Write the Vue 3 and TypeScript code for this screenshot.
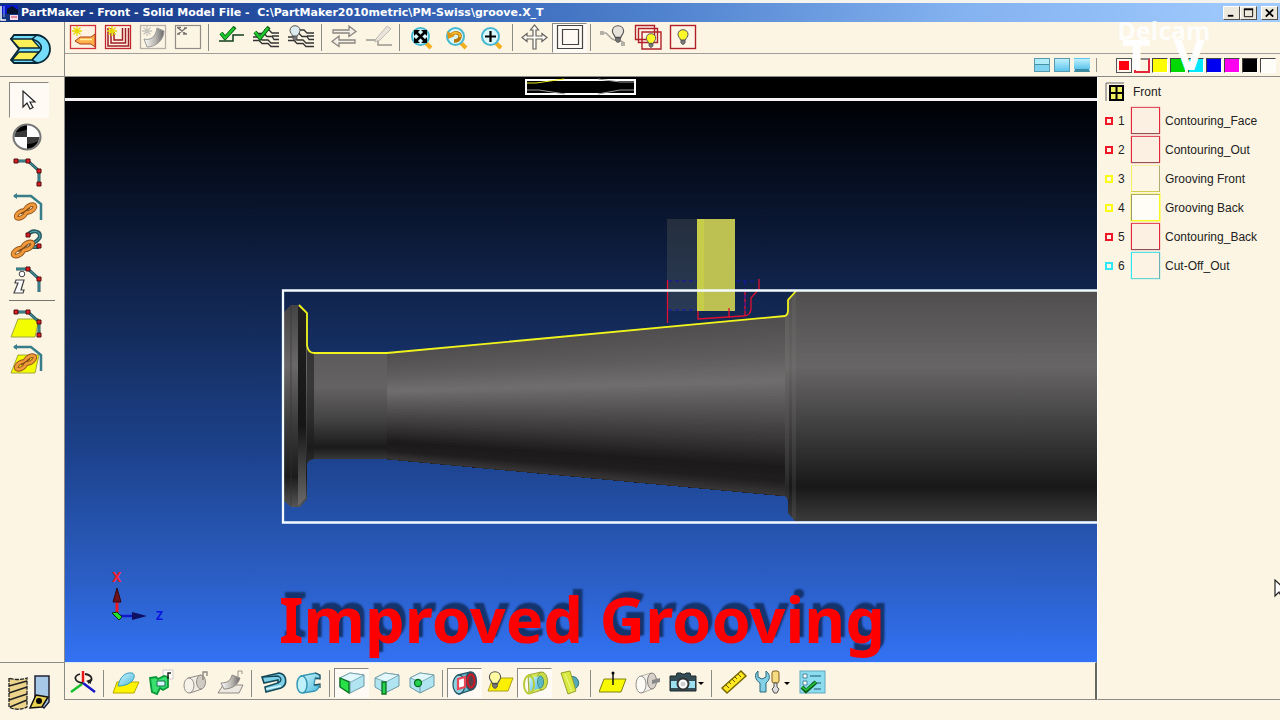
<script setup lang="ts">
import { ref } from 'vue'

interface Tool { id: string; label: string; wide?: boolean; pressed?: boolean; sep?: boolean }

const topTools: Tool[] = [
  { id: 'newgroup', label: 'New tool group' },
  { id: 'pocket', label: 'New pocket group' },
  { id: 'surface', label: 'New surface group' },
  { id: 'delete', label: 'Delete group' },
  { id: 's1', label: '', sep: true },
  { id: 'check', label: 'Verify path' },
  { id: 'checkall', label: 'Verify all paths' },
  { id: 'bulblines', label: 'Show paths' },
  { id: 's2', label: '', sep: true },
  { id: 'swap', label: 'Swap direction' },
  { id: 'pen', label: 'Edit line' },
  { id: 's3', label: '', sep: true },
  { id: 'zoomfit', label: 'Zoom to fit' },
  { id: 'zoomprev', label: 'Zoom previous' },
  { id: 'zoomin', label: 'Zoom in' },
  { id: 's4', label: '', sep: true },
  { id: 'pan', label: 'Pan' },
  { id: 'frame', label: 'Frame', pressed: true },
  { id: 's5', label: '', sep: true },
  { id: 'bulbpath', label: 'Highlight path' },
  { id: 'bulbstack', label: 'Show all groups' },
  { id: 'bulbbox', label: 'Show group' },
]

const leftTools: Tool[] = [
  { id: 'arrow', label: 'Select', pressed: true },
  { id: 'origin', label: 'Origin' },
  { id: 'poly', label: 'Profile' },
  { id: 'chain', label: 'Chain' },
  { id: 'chaincurve', label: 'Chain curve' },
  { id: 'info', label: 'Profile info' },
  { id: 's1', label: '', sep: true },
  { id: 'polyface', label: 'Profile on face' },
  { id: 'chainface', label: 'Chain on face' },
]

const bottomTools: Tool[] = [
  { id: 'axes', label: 'Rotate axes' },
  { id: 's1', label: '', sep: true },
  { id: 'dome', label: 'Surface on plane' },
  { id: 'greenpart', label: 'Align part' },
  { id: 'graycyl', label: 'Align cylinder' },
  { id: 'graysurf', label: 'Align surface' },
  { id: 's2', label: '', sep: true },
  { id: 'slot', label: 'Open solid' },
  { id: 'halfcyl', label: 'Half cylinder' },
  { id: 's3', label: '', sep: true },
  { id: 'boxface', label: 'Pick face', pressed: true },
  { id: 'boxedge', label: 'Pick edge' },
  { id: 'boxpoint', label: 'Pick point' },
  { id: 's4', label: '', sep: true },
  { id: 'redcyl', label: 'Shaded part', pressed: true },
  { id: 'bulbplane', label: 'Show plane' },
  { id: 'stock', label: 'Show stock', pressed: true },
  { id: 'clamp', label: 'Show clamp' },
  { id: 's5', label: '', sep: true },
  { id: 'planepin', label: 'Work plane' },
  { id: 'rotcyl', label: 'Rotate part' },
  { id: 'camera', label: 'Snapshot', wide: true },
  { id: 's6', label: '', sep: true },
  { id: 'ruler', label: 'Measure' },
  { id: 'wrench', label: 'Tools', wide: true },
  { id: 'checklist', label: 'Options' },
]

const groups = [
  { name: 'Contouring_Face', color: '#f01828', inner: '#fcf0e2', tone: 'red' },
  { name: 'Contouring_Out', color: '#f01828', inner: '#fcf0e2', tone: 'red' },
  { name: 'Grooving Front', color: '#fbfb18', inner: '#fdf6e4', tone: 'open' },
  { name: 'Grooving Back', color: '#fbfb18', inner: '#fffdf6', tone: 'yellow' },
  { name: 'Contouring_Back', color: '#f01828', inner: '#fcf0e2', tone: 'red' },
  { name: 'Cut-Off_Out', color: '#30e8f4', inner: '#fcf3e4', tone: 'cyan' },
]
const selected = ref('Grooving Back')

const swatches = ['#ff0010', '#fdf5e4', '#ffff00', '#00d800', '#00e8ff', '#0000f0', '#ff00f0', '#000000', '#fffdf8']

// Shading along the cone: grey level at fractions of its height
const stops: [number, number][] = [[0, 78], [0.2, 92], [0.36, 110], [0.5, 86], [0.68, 56], [0.84, 26], [0.92, 30], [1, 54]]
function level(f: number): number {
  for (let i = 1; i < stops.length; i++) {
    const [a, va] = stops[i - 1]
    const [b, vb] = stops[i]
    if (f <= b) return Math.round(va + ((vb - va) * (f - a)) / (b - a))
  }
  return 54
}
// Each band reaches down to the lower edge, and the next one is painted over it
const count = 72
const bands = Array.from({ length: count }, (_, i) => {
  const a = i / count
  const v = level((i + 0.5) / count)
  return {
    points: `387,${353 + 106 * a} 786,${316 + 180 * a} 786,496 387,459`,
    fill: `rgb(${v + 2},${v},${v})`,
  }
})
</script>

<template>
  <svg class="defs" aria-hidden="true">
    <defs>
      <linearGradient id="g-metal" x1="0" y1="0" x2="0" y2="1">
        <stop offset="0" stop-color="#504e4e" /><stop offset=".33" stop-color="#676565" />
        <stop offset=".55" stop-color="#464545" /><stop offset=".85" stop-color="#181818" />
        <stop offset="1" stop-color="#3c3b3b" />
      </linearGradient>
      <linearGradient id="g-neck" x1="0" y1="0" x2="0" y2="1">
        <stop offset="0" stop-color="#5b5959" /><stop offset=".35" stop-color="#646262" />
        <stop offset=".62" stop-color="#454444" /><stop offset=".86" stop-color="#1a1a1a" />
        <stop offset="1" stop-color="#464545" />
      </linearGradient>
      <linearGradient id="g-flange" x1="0" y1="0" x2="0" y2="1">
        <stop offset="0" stop-color="#454444" /><stop offset=".3" stop-color="#6a6868" />
        <stop offset=".6" stop-color="#3a3939" /><stop offset=".85" stop-color="#1b1b1b" />
        <stop offset="1" stop-color="#555" />
      </linearGradient>
      <linearGradient id="g-rim" x1="0" y1="0" x2="0" y2="1">
        <stop offset="0" stop-color="#222" /><stop offset=".6" stop-color="#161616" />
        <stop offset=".78" stop-color="#3c3c3c" /><stop offset="1" stop-color="#6b6969" />
      </linearGradient>
      <linearGradient id="g-blue" x1="0" y1="0" x2="1" y2="1">
        <stop offset="0" stop-color="#d8f8ff" /><stop offset="1" stop-color="#46b8dc" />
      </linearGradient>
      <linearGradient id="g-grey" x1="0" y1="0" x2="1" y2="0">
        <stop offset="0" stop-color="#fff" /><stop offset=".6" stop-color="#b5b2ad" /><stop offset="1" stop-color="#666" />
      </linearGradient>

      <symbol id="i-spark" viewBox="0 0 10 10">
        <path d="M5 0v10M0 5h10M1.500 1.500l7 7M8.500 1.500l-7 7" stroke="currentColor" stroke-width="1.300" fill="none" />
      </symbol>
      <symbol id="i-bulb" viewBox="0 0 12 16">
        <path d="M6 .7c-3 0-5 2-5 4.800 0 2.300 2 3.300 2.500 5.500h5C9 8.800 11 7.800 11 5.500 11 2.700 9 .7 6 .7z" fill="currentColor" stroke="#555" />
        <path d="M3.800 11.500h4.400v2L7 15.300H5l-1.200-1.800z" fill="#777" stroke="#444" stroke-width=".6" />
      </symbol>
      <symbol id="i-chainlink" viewBox="0 0 26 20">
        <g fill="none" stroke="#94561a" stroke-width="4.600">
          <ellipse cx="8" cy="13.500" rx="5.500" ry="3" transform="rotate(-32 8 13.500)" />
          <ellipse cx="17" cy="7.500" rx="5.500" ry="3" transform="rotate(-32 17 7.500)" />
        </g>
        <g fill="none" stroke="#f0983c" stroke-width="2.800">
          <ellipse cx="8" cy="13.500" rx="5.500" ry="3" transform="rotate(-32 8 13.500)" />
          <ellipse cx="17" cy="7.500" rx="5.500" ry="3" transform="rotate(-32 17 7.500)" />
        </g>
        <path d="M8 13l9-6" stroke="#7c4814" stroke-width="1.200" />
      </symbol>

      <symbol id="i-newgroup" viewBox="0 0 28 28">
        <rect x="1.500" y="1.500" width="25" height="23" fill="#fff2e0" stroke="#d03038" stroke-width="1.300" />
        <path d="M6 17l5-4h11l4-3v13l-4-3H11z" fill="#ffb04a" stroke="#b03c18" /><path d="M11 15.500h12" stroke="#fff0a0" stroke-width="1.500" />
        <use href="#i-spark" x="3" y="2" width="10" height="10" color="#e8d800" />
      </symbol>
      <symbol id="i-pocket" viewBox="0 0 28 28">
        <rect x="1.500" y="1.500" width="25" height="23" fill="#fff2e0" stroke="#c02830" stroke-width="1.300" />
        <path d="M4 4v18h20.500V4M7 4v15h14.500V4M10 8v8h8.500V4" fill="none" stroke="#a01c24" stroke-width="1.500" />
        <use href="#i-spark" x="3" y="2" width="10" height="10" color="#e8d800" />
      </symbol>
      <symbol id="i-surface" viewBox="0 0 28 28">
        <rect x="1.500" y="1.500" width="25" height="23" fill="none" stroke="#b5afa8" stroke-width="1.300" />
        <path d="M5 15c7 2 12-3 13-11l7 3c0 9-8 16-17 16z" fill="url(#g-grey)" stroke="#999" />
        <use href="#i-spark" x="3" y="2" width="10" height="10" color="#c8c4bd" />
      </symbol>
      <symbol id="i-delete" viewBox="0 0 28 28">
        <rect x="1.500" y="1.500" width="25" height="23" fill="none" stroke="#908c88" stroke-width="1.200" />
        <path d="M4 4l8 6M12 4l-8 6M3 3.500h4M9 10h4M3 10h3M10 4h3" stroke="#77736f" stroke-width="1.500" />
      </symbol>
      <symbol id="i-check" viewBox="0 0 28 28">
        <path d="M2 17h14v-6h11" fill="none" stroke="#123c20" stroke-width="1.500" />
        <path d="M4 9l4 5L18 3" fill="none" stroke="#086010" stroke-width="4" /><path d="M4 9l4 5L17 4" fill="none" stroke="#20c830" stroke-width="2.300" />
      </symbol>
      <symbol id="i-lines" viewBox="0 0 28 28">
        <path d="M1 13h6l3 3h6l3 3h8M1 16.500h6l3 3h6l3 3h8M5 9.500h7l3 3h5l2 3h5M12 6h5l3 3h7M20 12h7" fill="none" stroke="#333" stroke-width="1.300" />
      </symbol>
      <symbol id="i-checkall" viewBox="0 0 28 28">
        <use href="#i-lines" width="28" height="28" />
        <path d="M3 8l5 6L17 3" fill="none" stroke="#086010" stroke-width="4" /><path d="M3 8l5 6L16 4" fill="none" stroke="#20c830" stroke-width="2.300" />
      </symbol>
      <symbol id="i-bulblines" viewBox="0 0 28 28">
        <use href="#i-lines" width="28" height="28" /><use href="#i-bulb" x="2" y="1" width="12" height="16" color="#dcebee" />
      </symbol>
      <symbol id="i-swap" viewBox="0 0 28 28">
        <path d="M3 6h16V2l7 5.500-7 5V9H3zM25 16H9v-4l-7 5.500 7 5V19h16z" fill="#f4efe5" stroke="#8a8680" stroke-width="1.300" />
      </symbol>
      <symbol id="i-pen" viewBox="0 0 28 28">
        <path d="M1 16h12v5h14" fill="none" stroke="#9a968f" stroke-width="1.500" /><path d="M11 15L22 2l4 3-11 11-5 2z" fill="#eae5dc" stroke="#c0bbb3" />
      </symbol>
      <symbol id="i-glass" viewBox="0 0 28 28">
        <path d="M17 18l6 6" stroke="#f5b020" stroke-width="4" /><circle cx="12.500" cy="12.500" r="8.500" fill="#d8f8fb" stroke="#48b8d0" stroke-width="2" />
      </symbol>
      <symbol id="i-zoomfit" viewBox="0 0 28 28">
        <use href="#i-glass" width="28" height="28" /><path d="M8 8l9 9M17 8l-9 9" stroke="#000" stroke-width="2.500" /><path d="M6 6h6l-6 6zM19 6v6l-6-6zM6 19v-6l6 6zM19 19h-6l6-6z" />
      </symbol>
      <symbol id="i-zoomprev" viewBox="0 0 28 28">
        <use href="#i-glass" width="28" height="28" /><path d="M8 11c4-4 10-2 9 2s-4 4-6 4" fill="none" stroke="#b87808" stroke-width="3.400" /><path d="M8 11c4-4 10-2 9 2" fill="none" stroke="#f8b830" stroke-width="1.800" /><path d="M4 7l1 8 7-3z" fill="#e09814" />
      </symbol>
      <symbol id="i-zoomin" viewBox="0 0 28 28">
        <use href="#i-glass" width="28" height="28" /><path d="M12.500 7v11M7 12.500h11" stroke="#000" stroke-width="2.200" />
      </symbol>
      <symbol id="i-pan" viewBox="0 0 28 28">
        <path d="M12 25V15H6v2.500L1 13.500l5-4V12h6V6H9.500L13.500 1l4 5H15v6h6V9.500l5 4-5 4V15h-6v10z" fill="#fffdf8" stroke="#66625e" stroke-width="1.200" />
      </symbol>
      <symbol id="i-frame" viewBox="0 0 28 28">
        <path d="M1.500 1.500h25v23h-25zM6.500 5.500h16v15h-16z" fill="#fffaf4" stroke="#444" stroke-width="1.200" />
      </symbol>
      <symbol id="i-bulbpath" viewBox="0 0 28 28">
        <path d="M3 9h4l5 5c4 4 9 2 12 4v4" fill="none" stroke="#aaa59e" stroke-width="1.500" /><path d="M1 7h4v4H1zM22 18h4v4h-4z" fill="#b5b0a8" /><use href="#i-bulb" x="12" y="1" width="14" height="18" color="#e8e3da" />
      </symbol>
      <symbol id="i-bulbstack" viewBox="0 0 28 28">
        <path d="M1.500 1.500h19v14h-19zM4.500 4.500h19v14h-19zM8 8h19v17H8z" fill="#fff5e6" stroke="#b02028" stroke-width="1.400" /><use href="#i-bulb" x="11" y="9" width="12" height="15" color="#fdf828" />
      </symbol>
      <symbol id="i-bulbbox" viewBox="0 0 28 28">
        <rect x="1.500" y="1.500" width="25" height="23" fill="#fff5e6" stroke="#b02028" stroke-width="1.400" /><use href="#i-bulb" x="8" y="5" width="12" height="16" color="#fdf828" />
      </symbol>

      <symbol id="i-pointer" viewBox="0 0 14 20">
        <path d="M1 1v16l4-4 3 6 3-1.500-3-5.500h5z" fill="#fff" stroke="#222" stroke-width="1.200" />
      </symbol>
      <symbol id="i-arrow" viewBox="0 0 36 34"><use href="#i-pointer" x="12" y="6" width="14" height="22" /></symbol>
      <symbol id="i-origin" viewBox="0 0 36 34">
        <ellipse cx="17" cy="18" rx="13.500" ry="12.500" fill="#fff" stroke="#777" stroke-width="2" />
        <path d="M17 18V6.500C10 6.500 5 11 4.500 18zM17 18h12.500c-.5 7-6 11.500-12.500 11.500z" fill="#3a3a3a" />
        <path d="M6 13c3-5 8-7 11-6.500v4C13 12 9 13 6 13zM17 25c4 0 8-1 11-3-2 5-7 7.500-11 7.500z" fill="#000" />
      </symbol>
      <symbol id="i-line" viewBox="0 0 36 34">
        <path d="M6 6h12l11 10v13" fill="none" stroke="#275c66" stroke-width="3" /><path d="M6 6h12l11 10v13" fill="none" stroke="#4aa0aa" stroke-width="1" />
      </symbol>
      <symbol id="i-poly" viewBox="0 0 36 34">
        <use href="#i-line" width="36" height="34" /><path d="M4 4h4v4H4zM16 4h4v4h-4zM27 14h4v4h-4zM27 27h4v4h-4z" fill="#e01820" stroke="#501010" />
      </symbol>
      <symbol id="i-chain" viewBox="0 0 36 34">
        <path d="M4 5h17l10 8v16" fill="none" stroke="#387e8a" stroke-width="2.500" /><path d="M3 5l4-3v6z" fill="#387e8a" /><use href="#i-chainlink" x="3" y="10" width="26" height="20" />
      </symbol>
      <symbol id="i-chaincurve" viewBox="0 0 36 34">
        <path d="M18 8c4-6 12-4 12 1s-8 6-10 11h9" fill="none" stroke="#285c65" stroke-width="4" /><path d="M18 8c4-6 12-4 12 1s-8 6-10 11h9" fill="none" stroke="#5ab0b8" stroke-width="1" />
        <use href="#i-chainlink" x="0" y="11" width="27" height="21" /><path d="M16 6h4v4h-4zM27 17h4v4h-4z" fill="#e01820" stroke="#501010" />
      </symbol>
      <symbol id="i-info" viewBox="0 0 36 34">
        <use href="#i-line" width="36" height="34" /><path d="M16 4h4v4h-4zM27 14h4v4h-4z" fill="#e01820" stroke="#501010" />
        <circle cx="12" cy="11" r="2.800" fill="#fff" stroke="#444" /><path d="M6 17h8l-3 10h3l-1 3H4l4-10H5z" fill="#fff" stroke="#444" stroke-width="1.200" />
      </symbol>
      <symbol id="i-polyface" viewBox="0 0 36 34">
        <path d="M8 13h21l-4 18H1z" fill="#f4fc00" stroke="#a0a840" /><use href="#i-poly" width="36" height="34" />
      </symbol>
      <symbol id="i-chainface" viewBox="0 0 36 34">
        <path d="M8 13h21l-4 18H1z" fill="#f4fc00" stroke="#a0a840" /><use href="#i-chain" width="36" height="34" />
      </symbol>

      <symbol id="i-axes" viewBox="0 0 28 28">
        <path d="M14 2v11" stroke="#e81818" stroke-width="2.500" /><path d="M13 15L2 23" stroke="#18c030" stroke-width="2.500" /><path d="M14 14l12 9" stroke="#1818c8" stroke-width="2.500" />
        <path d="M14 14c-9-1-10-7-3-9M16 5c7 1 9 6 3 9" fill="none" stroke="#222" stroke-width="1.800" /><path d="M17 12l5-2 0 5z" fill="#222" />
      </symbol>
      <symbol id="i-dome" viewBox="0 0 28 28"><path d="M5 13h22l-5 11H1z" fill="#fff400" stroke="#b8a800" /><path d="M6 17C8 8 13 3 20 4c4 1 2 7-1 9-4 3-8 4-13 4z" fill="url(#g-blue)" stroke="#3a9cb8" /></symbol>
      <symbol id="i-greenpart" viewBox="0 0 28 28"><path d="M16 1h10v9H16z" fill="#fffdf8" stroke="#ccc" /><path d="M3 9l6-1 2 2 6-3 4 1v10l-5 3-3-2-3 6-5-2-1-6z" fill="#38e070" stroke="#0a9838" stroke-width="1.800" /><path d="M10 12h8v5h-8z" fill="#d8f4ff" stroke="#187048" /><path d="M21 10V4h3" fill="none" stroke="#222" stroke-width="1.500" /></symbol>
      <symbol id="i-graycyl" viewBox="0 0 28 28"><path d="M6 9l13-3 1 14-12 4z" fill="#f2ede4" /><path d="M6 9l13-3M8 24l12-4" stroke="#908c86" /><ellipse cx="7" cy="16.500" rx="5" ry="7.500" fill="#f6f2ea" stroke="#908c86" /><ellipse cx="19" cy="13" rx="4.500" ry="7" fill="#cfcac2" stroke="#908c86" /><path d="M21 11V3h4v4" fill="none" stroke="#888580" stroke-width="1.300" /></symbol>
      <symbol id="i-graysurf" viewBox="0 0 28 28"><path d="M6 16h20l-4 8H1z" fill="#eee9e0" stroke="#8f8b85" /><path d="M4 14c8 0 10-4 11-8l8 3c-2 7-8 11-16 11z" fill="url(#g-grey)" stroke="#8f8b85" /><path d="M21 9V2h4v3" fill="none" stroke="#99958f" /></symbol>
      <symbol id="i-slot" viewBox="0 0 28 28"><path d="M2 8l17-4c8 1 9 12 2 15L6 23l-1-5 13-4v-3L4 14z" fill="#7cd0e8" stroke="#164858" stroke-width="1.600" /><path d="M2 8l16-1c4 2 4 5 0 7" fill="none" stroke="#164858" stroke-width="1.300" /><path d="M6 20l15-3" stroke="#d4f6ff" stroke-width="1.300" /></symbol>
      <symbol id="i-halfcyl" viewBox="0 0 28 28"><path d="M6 7l15-3c3 1 4 3 4 5l-5 1-1 6 5 1c0 3-2 4-4 5L8 24z" fill="url(#g-blue)" stroke="#3798b4" stroke-width="1.300" /><ellipse cx="7" cy="15.500" rx="5" ry="8.500" fill="#c0f0fa" stroke="#3798b4" stroke-width="1.500" /><path d="M20 4l5 2v4l-5-1M19 16l6-1v4" fill="none" stroke="#265868" stroke-width="1.300" /></symbol>
      <symbol id="i-box" viewBox="0 0 28 28"><path d="M2 9l10-5 14 2v11l-14 7L2 18z" fill="#b0e4f0" stroke="#6a98a4" /><path d="M2 9l11 4 13-7-14-2z" fill="#e2f8fc" stroke="#6a98a4" stroke-width=".8" /><path d="M12 13v11" stroke="#6a98a4" /></symbol>
      <symbol id="i-boxface" viewBox="0 0 28 28"><use href="#i-box" width="28" height="28" /><path d="M2 9l9 4v11l-9-6z" fill="#28e048" stroke="#087020" stroke-width="1.300" /></symbol>
      <symbol id="i-boxedge" viewBox="0 0 28 28"><use href="#i-box" width="28" height="28" /><path d="M9 13h4v12H9z" fill="#28d050" stroke="#087020" stroke-width="1.300" /></symbol>
      <symbol id="i-boxpoint" viewBox="0 0 28 28"><use href="#i-box" width="28" height="28" /><circle cx="10" cy="14" r="3.500" fill="#28d050" stroke="#087020" stroke-width="1.300" /></symbol>
      <symbol id="i-redcyl" viewBox="0 0 28 28"><path d="M7 6l12-3 1 18-12 4z" fill="#68bcd0" stroke="#285868" stroke-width="1.300" /><ellipse cx="8" cy="15.500" rx="6" ry="9.500" fill="#8cd4e4" stroke="#285868" stroke-width="1.300" /><ellipse cx="20" cy="12" rx="5.500" ry="9" fill="#584048" stroke="#285868" stroke-width="1.300" /><ellipse cx="20" cy="12" rx="3.500" ry="6.500" fill="none" stroke="#d01828" stroke-width="2" /><path d="M7 10l7-2v10l-7 2z" fill="#fff" stroke="#e84858" stroke-width="2.200" /></symbol>
      <symbol id="i-bulbplane" viewBox="0 0 28 28"><path d="M7 9h20l-5 13H2z" fill="#faf000" stroke="#a8a020" /><use href="#i-bulb" x="2" y="2" width="14" height="18" color="#fffaa0" /></symbol>
      <symbol id="i-stock" viewBox="0 0 28 28"><path d="M7 6l13-3 1 18-13 4z" fill="#d4e858" stroke="#a0a838" /><ellipse cx="21" cy="12" rx="5.500" ry="9" fill="#c8dc48" stroke="#98a030" /><path d="M8 9l11-2 1 12-11 3z" fill="url(#g-blue)" /><ellipse cx="19.500" cy="13" rx="3" ry="6" fill="#58b8c8" stroke="#488c80" /><ellipse cx="8" cy="15.500" rx="5" ry="9" fill="none" stroke="#b8cc38" stroke-width="2" /></symbol>
      <symbol id="i-clamp" viewBox="0 0 28 28"><path d="M14 8c9-3 12 10 4 12z" fill="#54a8b8" stroke="#2c7080" /><path d="M5 4l9-2 6 20-8 3z" fill="#d8e840" stroke="#98a028" /><path d="M9 5l7 18" stroke="#f0fa90" /></symbol>
      <symbol id="i-planepin" viewBox="0 0 28 28"><path d="M5 10h22l-5 13H0z" fill="#f8f800" stroke="#808018" /><path d="M14 16V4" stroke="#111" stroke-width="1.500" /><circle cx="14" cy="4" r="1.500" /></symbol>
      <symbol id="i-rotcyl" viewBox="0 0 28 28"><path d="M7 7l10-3 1 16-10 4z" fill="#f2eee8" stroke="#b5b0a8" /><ellipse cx="7" cy="15.500" rx="5" ry="8.500" fill="#fcfaf4" stroke="#908c86" /><ellipse cx="18" cy="12" rx="4.500" ry="8" fill="#d5d0c8" stroke="#827e78" /><path d="M18 11l8-2v4l-8 2z" fill="#888" /></symbol>
      <symbol id="i-camera" viewBox="0 0 28 28"><path d="M1 7h6l1-3h4l1 1h3l1-1h4l1 3h5v15H1z" fill="#344d54" stroke="#18282d" /><path d="M2 12h24v7H2z" fill="#9ce0f0" /><circle cx="14" cy="15" r="5.500" fill="#fff" stroke="#333" stroke-width="2" /><circle cx="14" cy="15" r="2.500" fill="#d0d0d0" /></symbol>
      <symbol id="i-ruler" viewBox="0 0 28 28"><path d="M2 19L21 2l5 5L7 24z" fill="#ffe820" stroke="#786800" stroke-width="1.500" /><path d="M6 16l3 3M9 13l2 2M12 10l3 3M15 8l2 2M18 5l3 3" stroke="#685800" /></symbol>
      <symbol id="i-wrench" viewBox="0 0 28 28"><path d="M3 2v6l4 2 4-2V2c5 4 4 9 0 12v9H5v-9C0 11-1 5 3 2z" fill="#84d0e4" stroke="#28687c" /><rect x="17" y="2" width="7" height="12" rx="2" fill="#f6dc80" stroke="#805c20" /><path d="M19 14h3v4l2 2-2 4h-3l-2-4 2-2z" fill="#ddd" stroke="#555" /></symbol>
      <symbol id="i-checklist" viewBox="0 0 28 28"><rect x="2" y="2" width="25" height="22" fill="#8cdcf0" stroke="#60a8c0" /><path d="M5 5h4v4H5zM5 12h4v4H5z" fill="#fff" stroke="#488498" /><path d="M12 7h11M14 14h9M16 20h7" stroke="#408498" stroke-width="1.500" /><path d="M4 18l4 4 10-9" fill="none" stroke="#0b5818" stroke-width="4" /><path d="M4 18l4 3 10-8" fill="none" stroke="#20b838" stroke-width="2" /></symbol>
    </defs>
  </svg>

  <div class="app">
    <header class="titlebar">
      <svg class="appicon" viewBox="0 0 20 18"><path d="M2 1h16v9H2z" fill="#0818c8" /><path d="M7 5l5-3 6 4v4H7z" fill="#06122e" /><path d="M1 2v14h5" fill="none" stroke="#fff" stroke-width="1.500" /><path d="M4 2v11" stroke="#8ca0ff" /><path d="M10 11h8v5h-8z" fill="#f8dce8" /><path d="M11 13h6" stroke="#d03858" /></svg>
      <h1>PartMaker - Front - Solid Model File -&nbsp; C:\PartMaker2010metric\PM-Swiss\groove.X_T</h1>
      <div class="winbtns">
        <button type="button" aria-label="Minimize"><svg viewBox="0 0 16 13"><path d="M4 9.500h6" stroke="#000" stroke-width="2" /></svg></button>
        <button type="button" aria-label="Maximize"><svg viewBox="0 0 16 13"><path d="M3.500 2.500h9v8h-9z" fill="none" stroke="#000" /><path d="M3 2.500h10" stroke="#000" stroke-width="2" /></svg></button>
        <button type="button" class="close" aria-label="Close"><svg viewBox="0 0 16 13"><path d="M4 2.500l8 8M12 2.500l-8 8" stroke="#000" stroke-width="2" /></svg></button>
      </div>
    </header>

    <div class="body">
      <aside class="left">
        <div class="logo">
          <svg viewBox="0 0 44 32">
            <path d="M6 2h23c8 1 13 7 13 14s-5 13-13 14H6l-3-3 8-11-8-10z" fill="#74dcf8" stroke="#082838" stroke-width="1.800" />
            <path d="M3 6h21l8 9H11z" fill="#fbf058" stroke="#082838" stroke-width="1.300" />
            <path d="M11 19h20l-7 8H4z" fill="#fbf058" stroke="#082838" stroke-width="1.300" />
            <path d="M24 6l5-4M24 27l5 3M24 6c9 3 11 8 8 12l-8 9" fill="none" stroke="#082838" stroke-width="1.500" />
          </svg>
        </div>
        <nav class="tools" aria-label="Geometry">
          <template v-for="t in leftTools" :key="t.id">
            <span v-if="t.sep" class="hsep"></span>
            <button v-else type="button" :class="{ pressed: t.pressed }" :aria-label="t.label"><svg><use :href="'#i-' + t.id" /></svg></button>
          </template>
        </nav>
        <div class="mill">
          <svg viewBox="0 0 44 36"><path d="M2 3v29c5 3 13 3 18 0V3c-5 2-13 2-18 0z" fill="#ecd48c" stroke="#222" stroke-width="1.300" stroke-dasharray="4 1" /><path d="M2 11l18-5M2 18l18-6M2 25l18-6M3 32l17-7" stroke="#222" stroke-width="1.500" /><path d="M28 1h14v26l-5 6-9-7z" fill="#a8c8e8" stroke="#223" stroke-width="1.500" /><path d="M29 20l12 2-6 10-12 1z" fill="#e8d050" stroke="#111" stroke-width="1.500" /><circle cx="32" cy="26" r="3" /></svg>
        </div>
      </aside>

      <main class="right">
        <div class="bar top">
          <template v-for="t in topTools" :key="t.id">
            <span v-if="t.sep" class="vsep"></span>
            <button v-else type="button" :class="{ pressed: t.pressed }" :aria-label="t.label"><svg><use :href="'#i-' + t.id" /></svg></button>
          </template>
        </div>

        <div class="strip">
          <div class="views">
            <button type="button" class="split" aria-label="Split view"></button>
            <button type="button" aria-label="Single view"></button>
            <button type="button" class="low" aria-label="Lower view"></button>
          </div>
          <div class="palette">
            <button v-for="(c, i) in swatches" :key="c" type="button" :class="{ chosen: i === 0, hollow: i === 1 }" :style="{ backgroundColor: c }" :aria-label="'Colour ' + (i + 1)"></button>
          </div>
        </div>

        <div class="mid">
          <section class="viewport">
            <div class="canvas">
              <svg class="scene" viewBox="65 77 1032 585" preserveAspectRatio="xMinYMin slice">
                <path d="M65 77h3000v22H65z" fill="#000" />
                <path d="M65 99.500h3000" stroke="#f4f2f2" stroke-width="3" />
                <rect x="526" y="80" width="109" height="14" fill="#000" stroke="#fff" stroke-width="2" />
                <path d="M598 79l22 3h14M527 90h12l26 4M598 94l22-4h14" fill="none" stroke="#999" />
                <path d="M527 83h9l28-4" fill="none" stroke="#e8e820" />

                <path d="M284 312l7-7h8l8 8v186l-7 8h-9l-7-6z" fill="url(#g-flange)" />
                <path d="M298 306l8 7v185l-8 8z" fill="url(#g-rim)" />
                <path d="M291 306v200" stroke="#333" stroke-opacity=".3" stroke-width="2" />
                <path d="M307 345q1 8 7 8h73v106h-72q-6 0-8 5z" fill="url(#g-neck)" />
                <path d="M307 345q1 8 7 8v106q-5 0-7 5z" fill="#1c1c1c" fill-opacity=".6" />
                <polygon v-for="b in bands" :key="b.points" :points="b.points" :fill="b.fill" />
                <path d="M785 316l3-4v-14l9-7h2v230h-4l-7-8v-13l-3-4z" fill="url(#g-metal)" />
                <path d="M787 313v186M794 294v225" stroke="#8a8888" stroke-opacity=".15" stroke-width="4" />
                <path d="M797 291h3000v230H797z" fill="url(#g-metal)" />
                <path d="M299 305l8 8v32q1 8 7 8h73l398-37q3-1 3-6v-10l8-9" fill="none" stroke="#f0f41c" stroke-width="1.800" />

                <rect x="667" y="219" width="30" height="92" fill="#6a7060" fill-opacity=".27" />
                <rect x="697" y="219" width="38" height="92" fill="#bdc151" />
                <rect x="697" y="219" width="7" height="92" fill="#c8cd49" />
                <path d="M667.500 280v43M698 311v8l45-3q8 0 8-8v-10l8-9v-10M729 308v10M745 292v24" fill="none" stroke="#e01030" stroke-width="1.300" />
                <path d="M668 281h29M668 310h29M736 281h18M745 281v30" fill="none" stroke="#1414b0" stroke-width="1" stroke-dasharray="4 3" />
                <path d="M283 522.500V290.500h3000v232z" fill="none" stroke="#f2fbff" stroke-width="2.300" />

                <path d="M117 615v-14" stroke="#f01820" stroke-width="3" /><path d="M117 588l4 14h-8z" fill="#701018" stroke="#300810" />
                <path d="M117 616h16" stroke="#1018c8" stroke-width="2.500" /><path d="M147 616l-15-4v8z" fill="#101060" />
                <path d="M112 613l5-1 5 5-3 3z" fill="#20e030" stroke="#083008" />
                <text x="112" y="582" class="ax x">X</text>
                <text x="156" y="620" class="ax z">Z</text>
              </svg>
              <p class="caption">Improved Grooving</p>
            </div>
            <div class="bar bottom">
              <template v-for="t in bottomTools" :key="t.id">
                <span v-if="t.sep" class="vsep"></span>
                <button v-else type="button" :class="{ pressed: t.pressed, wide: t.wide }" :aria-label="t.label">
                  <svg><use :href="'#i-' + t.id" /></svg><i v-if="t.wide" class="drop"></i>
                </button>
              </template>
            </div>
          </section>

          <aside class="groups">
            <button type="button" class="front">
              <svg viewBox="0 0 20 20"><path d="M1 19V1h18" fill="none" stroke="#666" /><rect x="5" y="4" width="13" height="14" fill="#f0f060" stroke="#000" stroke-width="2" /><path d="M11.500 4v14M5 11h13" stroke="#000" stroke-width="2" /></svg>
              <span>Front</span>
            </button>
            <button v-for="(g, i) in groups" :key="g.name" type="button" class="group" :aria-pressed="selected === g.name" @click="selected = g.name">
              <span class="mark" :style="{ borderColor: g.color }"></span>
              <span class="num">{{ i + 1 }}</span>
              <span class="thumb" :class="g.tone" :style="{ backgroundColor: g.inner }"></span>
              <span>{{ g.name }}</span>
            </button>
          </aside>
        </div>
      </main>
    </div>
    <footer class="status"></footer>

    <div class="brand"><span class="name">Delcam</span><span class="tv"><b>T</b><b>V</b></span></div>
    <svg class="cursor" viewBox="0 0 14 20"><use href="#i-pointer" /></svg>
  </div>
</template>

<style>
body { overflow: hidden; background: #fdf5e3; }
</style>

<style scoped>
.defs { position: absolute; width: 0; height: 0; }
.app { position: relative; display: flex; flex-direction: column; height: 100vh; overflow: hidden; background: #fdf5e3; font: 12px/16px "Liberation Sans", Arial, sans-serif; color: #222; }
button { appearance: none; margin: 0; padding: 0; border: 0; background: none; color: inherit; font: inherit; border-radius: 0; }
svg { display: block; }

.titlebar { display: flex; align-items: center; flex: none; height: 19px; border-top: 3px solid #f4f3ee; background: linear-gradient(90deg, #13327e 0, #2a54a8 25%, #4c7fcc 50%, #84b2f0 75%, #a2ccff 100%); }
.appicon { width: 20px; height: 18px; margin-right: 1px; }
h1 { flex: 1; margin: 0; color: #fff; font: bold 11px/18px "DejaVu Sans", sans-serif; white-space: nowrap; }
.winbtns { display: flex; padding-right: 2px; }
.winbtns button { width: 17px; height: 14px; background: #eee9dd; border: 1px solid; border-color: #fff #55524c #55524c #fff; }
.winbtns svg { width: 15px; height: 12px; }
.winbtns .close { margin-left: 4px; }

.body { display: flex; flex: 1; min-height: 0; }
.left { display: flex; flex-direction: column; flex: none; width: 64px; border-right: 1px solid #8d8b88; }
.logo { display: flex; align-items: center; height: 54px; padding-left: 8px; border-bottom: 1px solid #8d8b88; }
.logo svg { width: 44px; height: 32px; }
.tools { display: flex; flex: 1; flex-direction: column; padding: 5px 9px; }
.tools button { flex: none; width: 40px; height: 36px; border: 1px solid transparent; }
.tools svg { width: 36px; height: 34px; }
.hsep { height: 1px; margin: 2px 0 4px; background: #77746e; }
.pressed, .tools .pressed { background: #fffaf3; border-color: #8a8883 #fffaf3 #fffaf3 #8a8883; }
.mill { display: flex; align-items: center; height: 37px; padding: 0 0 0 7px; border-top: 1px solid #8d8b88; }
.mill svg { width: 44px; height: 36px; margin-top: 22px; }

.right { display: flex; flex: 1; flex-direction: column; min-width: 0; }
.bar { display: flex; align-items: center; flex: none; }
.bar button { display: flex; flex: none; align-items: center; justify-content: center; width: 35px; height: 30px; border: 1px solid transparent; }
.bar svg { flex: none; width: 28px; height: 28px; }
.bar .pressed { border-color: #8a8883 #fffaf3 #fffaf3 #8a8883; }
.vsep { flex: none; width: 1px; height: 27px; margin: 0 4px 0 3px; background: #8d8b88; }
.top { height: 31px; border-bottom: 1px solid #a09d98; }

.strip { display: flex; align-items: center; justify-content: flex-end; flex: none; height: 22px; border-bottom: 1px solid #8d8b88; }
.views { display: flex; gap: 4px; padding-right: 6px; border-right: 1px solid #99958e; }
.views button { width: 16px; height: 14px; border: 1px solid #5a9aac; background: linear-gradient(#c0f0fc, #5cc4ec); }
.views .split { background: linear-gradient(#b0ecfa 0 5px, #4890a4 5px 6px, #80d4f0 6px); }
.views .low { border-color: transparent transparent #3e8ca4; border-bottom-width: 3px; }
.palette { display: flex; gap: 2px; box-sizing: border-box; width: 183px; padding-left: 19px; }
.palette button { flex: none; width: 16px; height: 15px; border: 1px solid; border-color: #444 #fff #fff #444; }
.palette .chosen { border: 3px solid #fff8ee; outline: 1px solid #555; outline-offset: -1px; }
.palette .hollow { border: 2px solid #e02838; border-top-color: #888; }

.mid { display: flex; flex: 1; min-height: 0; }
.viewport { display: flex; flex: 1; flex-direction: column; min-width: 0; }
.canvas { position: relative; flex: 1; min-height: 0; overflow: hidden; background: linear-gradient(#000 0, #000208 6%, #0a1630 24%, #132a58 42%, #1d438e 65%, #2a5cc0 84%, #3272f4 100%); }
.scene { width: 100%; height: 100%; }
.ax { font: bold 14px "Noto Sans", sans-serif; }
.x { fill: #f02030; }
.z { font-size: 12px; fill: #0a14e0; }
.caption { position: absolute; left: 214px; bottom: 0; margin: 0; color: #f00; font: bold 63px/86px "Noto Sans", "Open Sans", sans-serif; white-space: nowrap; text-shadow: 4px -6px 2px #14346e; }
.bottom { height: 32px; padding-top: 4px; border-top: 1px solid #dceaf8; border-right: 2px solid #66665c; border-bottom: 1px solid #8d8b88; overflow: hidden; }
.bottom button.wide { width: 43px; }
.drop { border: 3px solid transparent; border-top-color: #000; border-bottom: 0; margin-left: 1px; }

.groups { display: flex; flex: none; flex-direction: column; align-items: flex-start; box-sizing: border-box; width: 183px; padding: 4px 0 0 7px; border-bottom: 1px solid #8d8b88; border-left: 1px solid #fff; color: #222; }
.front { display: flex; align-items: center; gap: 8px; height: 22px; margin-bottom: 3px; }
.front svg { width: 20px; height: 20px; }
.group { display: flex; align-items: center; height: 29px; white-space: nowrap; }
.mark { width: 4px; height: 4px; border: 2px solid; }
.num { width: 18px; padding-left: 5px; box-sizing: border-box; text-align: left; }
.thumb { width: 27px; height: 25px; margin-right: 5px; border: 1px solid; }
.red { border-color: #e05060 #e02838 #905058 #e02838; box-shadow: 0 0 1px #e05060; }
.open { border-color: #f5f0a8 #b0ac70 #d0cc50 #f5f060; }
.yellow { border-color: #b0ae68 #f8f820 #f8f820 #99976c; box-shadow: 0 0 0 1px #fbf890; }
.cyan { border-color: #50e0e8 #70b0b0 #70d0d0 #30e8f4; box-shadow: 0 0 1px #30e8f4; }

.status { flex: none; height: 20px; }
.brand { position: absolute; top: 16px; right: 69px; display: flex; flex-direction: column; align-items: center; width: 94px; color: #fff; pointer-events: none; }
.name { font: bold 25px/28px "Noto Sans", sans-serif; opacity: .8; }
.tv { display: flex; justify-content: space-between; width: 82px; font: bold 40px/24px "DejaVu Sans", sans-serif; }
.cursor { position: absolute; right: -8px; top: 579px; width: 14px; height: 20px; }
</style>
